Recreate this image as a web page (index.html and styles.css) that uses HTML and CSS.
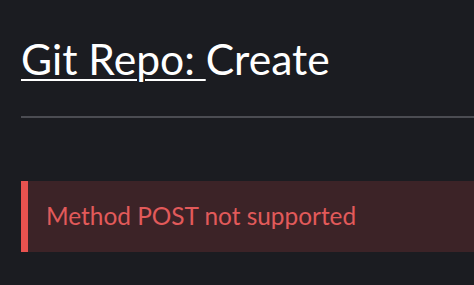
FILE: index.html
```html
<!DOCTYPE html>
<html>
<head>
<meta charset="utf-8">
<link rel="stylesheet" href="styles.css">
</head>
<body>
<main class="page">
  <h1 class="title"><a class="title-link" href="#">Git Repo: </a>Create</h1>
  <hr class="rule">
  <div class="alert">Method POST not supported</div>
</main>
</body>
</html>
```
FILE: styles.css
```css
html, body {
  margin: 0;
  padding: 0;
  background: #1b1c21;
}
.page {
  padding: 33px 0 0 21px;
  font-family: Lato, "Open Sans", sans-serif;
  color: #ffffff;
}
.title {
  margin: 0;
  font-size: 42.6px;
  line-height: 1.2;
  font-weight: 400;
  white-space: pre;
}
.title-link {
  color: #ffffff;
  text-decoration: underline;
  text-decoration-thickness: 2px;
  text-underline-offset: 4px;
}
.rule {
  margin: 32px 0 0 0;
  border: 0;
  height: 2px;
  background: #4b4c52;
}
.alert {
  margin-top: 63px;
  background: #3c2327;
  border-left: 7px solid #e8524f;
  padding: 17px 18px;
  font-size: 24.4px;
  line-height: 1.5;
  color: #e25a5a;
}
```
